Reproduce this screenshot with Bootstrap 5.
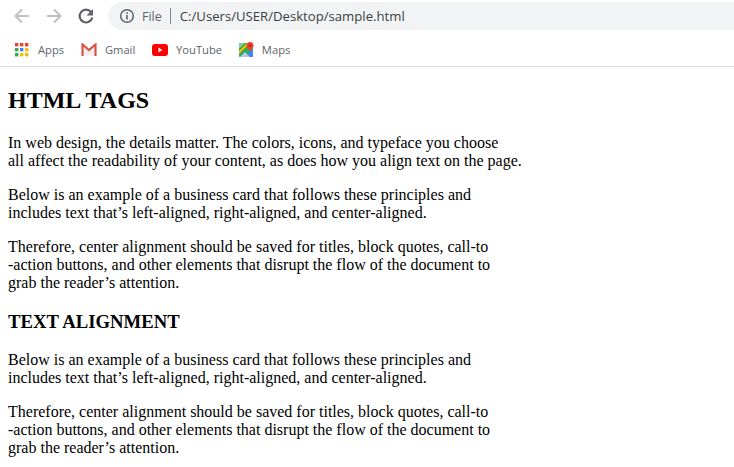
<!doctype html>
<html lang="en"><head><meta charset="utf-8"><title>sample</title>
<link href="https://cdn.jsdelivr.net/npm/bootstrap@5.3.0/dist/css/bootstrap.min.css" rel="stylesheet">
<style>
html,body{margin:0;background:#fff;overflow:hidden}
.toolbar{height:33px;padding:2px 0 3px 0}
.omni{height:28px;margin-left:108px;flex:1;background:#f1f3f4;border-radius:14px 0 0 14px;font:13.15px "Open Sans","Noto Sans",sans-serif;color:#3c4043;padding-left:11px}
.navglyph{position:absolute;top:7px}
.chrome{position:relative}
.sep{width:1px;height:16px;background:#80868b;margin:0 9px 0 8px}
.scheme{color:#5f6368;margin-left:7px;font-size:12.5px}
.bmbar{height:34px;border-bottom:1px solid #d9d9d9;padding-left:15px;font:11.2px "Open Sans","Noto Sans",sans-serif;color:#5f6368}
.bm{margin-right:16.8px}
.bm svg{margin-right:8px;flex:none}
.bm svg.wide-gap{margin-right:9px}
.docpage{padding:0 8px;font:16px/18px "Liberation Serif","Times New Roman",serif;color:#000}
.docpage h1{font:bold 24px/27px "Liberation Serif",serif;margin:20px 0 20px}
.docpage h2{font:bold 18.72px/21px "Liberation Serif",serif;margin:19px 0 19px}
.docpage p{margin:0 0 16px}
</style></head><body>
<div class="chrome">
<div class="toolbar d-flex">
<svg class="navglyph" style="left:13px" width="18" height="18" viewBox="0 0 18 18"><path d="M16 9H3M9 2.500 2.500 9 9 15.500" fill="none" stroke="#bdc1c6" stroke-width="2"/></svg>
<svg class="navglyph" style="left:45px" width="18" height="18" viewBox="0 0 18 18"><path d="M2 9h13M9 2.500 15.500 9 9 15.500" fill="none" stroke="#bdc1c6" stroke-width="2"/></svg>
<svg class="navglyph" style="left:77px" width="18" height="18" viewBox="0 0 18 18"><path d="M14 5A6.400 6.400 0 1 0 15.300 10.500" fill="none" stroke="#5f6368" stroke-width="2.200"/><path d="M16 2v6.500H9.500z" fill="#5f6368"/></svg>
<div class="omni d-flex align-items-center">
<svg width="16" height="16" viewBox="0 0 16 16"><circle cx="8" cy="8" r="6.300" fill="none" stroke="#5f6368" stroke-width="1.500"/><path d="M7.200 7h1.600v4.500H7.200zM7.200 4.300h1.600v1.600H7.200z" fill="#5f6368"/></svg>
<span class="scheme">File</span><span class="sep"></span><span>C:/Users/USER/Desktop/sample.html</span>
</div></div>
<div class="bmbar d-flex align-items-center">
<div class="bm d-flex align-items-center"><svg class="wide-gap" width="14" height="14" viewBox="0 0 14 14"><g><rect x="0" y="0" width="3.400" height="3.400" fill="#ea4335"/><rect x="5" y="0" width="3.400" height="3.400" fill="#ea4335"/><rect x="10" y="0" width="3.400" height="3.400" fill="#ea4335"/><rect x="0" y="5" width="3.400" height="3.400" fill="#34a853"/><rect x="5" y="5" width="3.400" height="3.400" fill="#4285f4"/><rect x="10" y="5" width="3.400" height="3.400" fill="#fbbc04"/><rect x="0" y="10" width="3.400" height="3.400" fill="#34a853"/><rect x="5" y="10" width="3.400" height="3.400" fill="#fbbc04"/><rect x="10" y="10" width="3.400" height="3.400" fill="#fbbc04"/></g></svg>Apps</div>
<div class="bm d-flex align-items-center"><svg width="16" height="13" viewBox="0 0 16 13"><path d="M1.500 12.500V3L8 8l6.500-5v9.500z" fill="#efefef"/><path d="M1.500 13V1.500L8 7l6.500-5.500V13" fill="none" stroke="#d9534a" stroke-width="2.200"/></svg>Gmail</div>
<div class="bm d-flex align-items-center"><svg width="16" height="12" viewBox="0 0 16 12"><rect width="16" height="12" rx="3" fill="#f00"/><path d="M6.500 3.500 10.500 6l-4 2.500z" fill="#fff"/></svg>YouTube</div>
<div class="bm d-flex align-items-center"><svg width="15" height="15" viewBox="0 0 15 15"><rect y="1" width="14" height="14" rx="1" fill="#34a853"/><path d="M6 15 14 7v8z" fill="#4285f4"/><path d="M0 9 8 1h3L0 12z" fill="#fbbc04"/><path d="M1 15l5-5 5 5z" fill="#aecbfa"/><path d="M0 1h6L0 7z" fill="#81c995"/><circle cx="11" cy="3.500" r="3.500" fill="#ea4335"/><path d="M8.500 5h5L11 10z" fill="#ea4335"/><circle cx="11" cy="3.500" r="1.200" fill="#a52714"/></svg>Maps</div>
</div></div>
<main class="docpage">
<h1>HTML TAGS</h1>
<p>In web design, the details matter. The colors, icons, and typeface you choose<br>all affect the readability of your content, as does how you align text on the page.</p>
<p>Below is an example of a business card that follows these principles and<br>includes text that’s left-aligned, right-aligned, and center-aligned.</p>
<p>Therefore, center alignment should be saved for titles, block quotes, call-to<br>-action buttons, and other elements that disrupt the flow of the document to<br>grab the reader’s attention.</p>
<h2>TEXT ALIGNMENT</h2>
<p>Below is an example of a business card that follows these principles and<br>includes text that’s left-aligned, right-aligned, and center-aligned.</p>
<p>Therefore, center alignment should be saved for titles, block quotes, call-to<br>-action buttons, and other elements that disrupt the flow of the document to<br>grab the reader’s attention.</p>
</main>
</body></html>
